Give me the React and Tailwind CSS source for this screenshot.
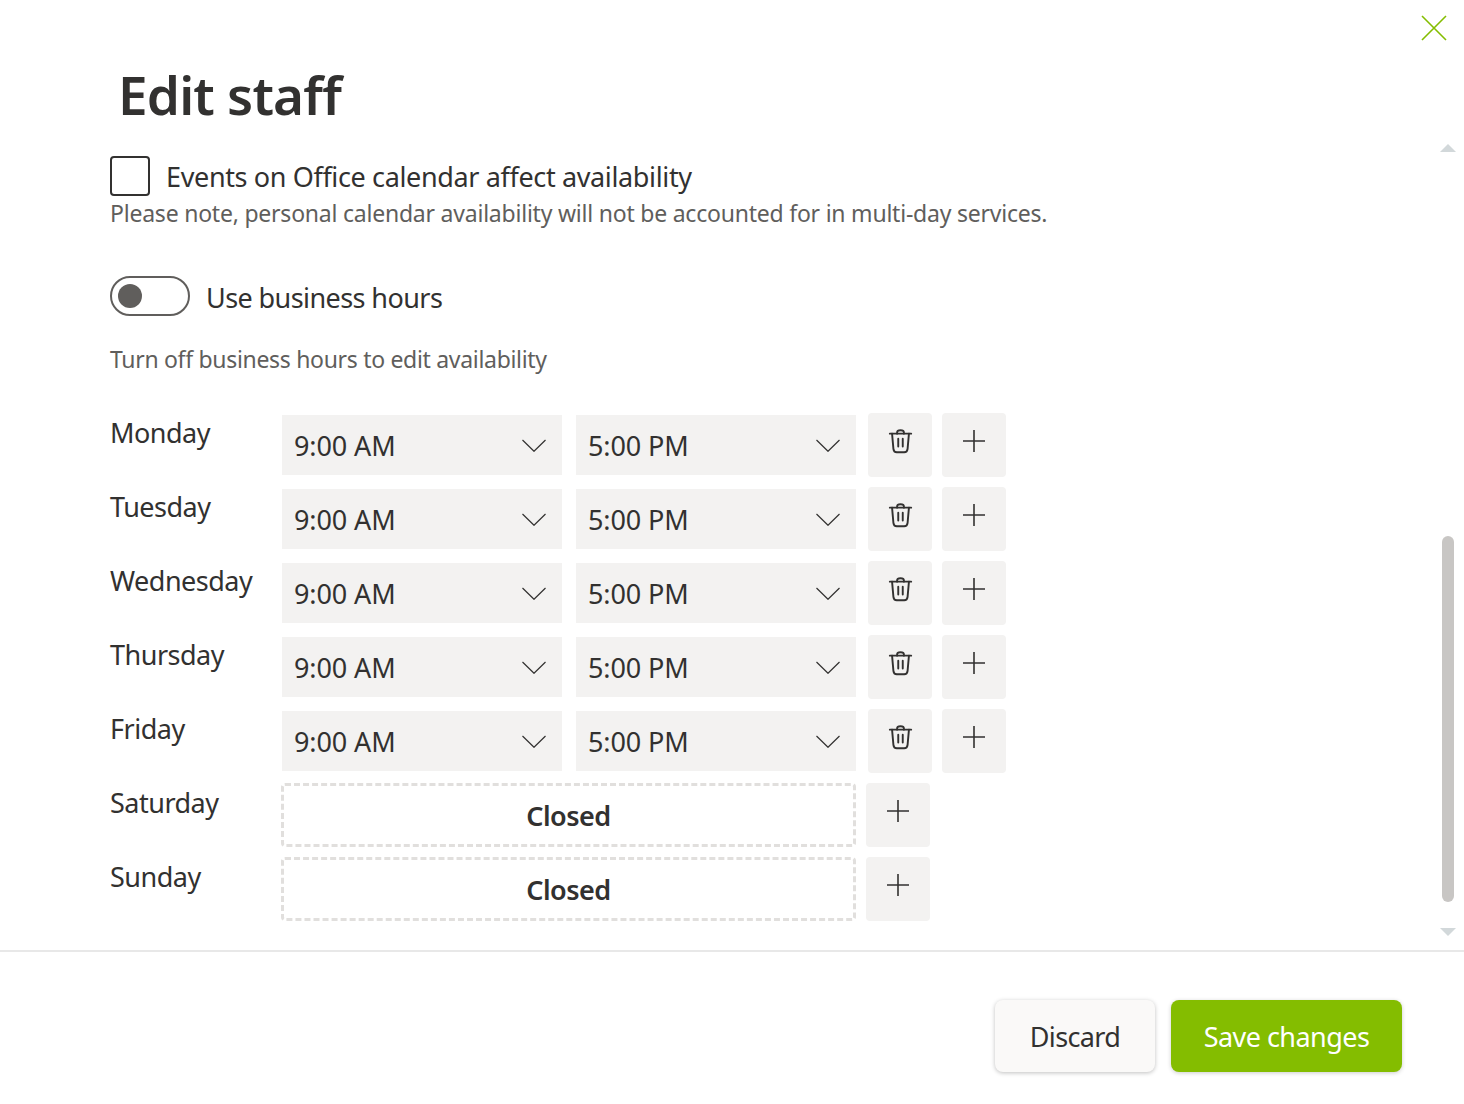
const FONT = "font-['Noto_Sans',sans-serif]";

const openDays = ["Monday", "Tuesday", "Wednesday", "Thursday", "Friday"];
const closedDays = ["Saturday", "Sunday"];

const TrashIcon = () => (
  <svg className="-mt-[2px]" width="27" height="27" viewBox="0 0 24 24" fill="none" stroke="#323130" strokeWidth="1.7" strokeLinecap="round" strokeLinejoin="round">
    <path d="M2.5 5h19" />
    <path d="M9 5V3.8C9 2.8 10 2 12 2s3 .8 3 1.8V5" />
    <path d="M4.5 5l1.2 13.5c.2 2 1.4 3 3 3h6.6c1.6 0 2.8-1 3-3L19.5 5" />
    <path d="M10 9.5v7M14 9.5v7" />
  </svg>
);

const ChevronIcon = () => (
  <svg width="24" height="13" viewBox="0 0 24 13" fill="none" stroke="#323130" strokeWidth="1.2">
    <path d="M.5 1L12 12.3 23.5 1" />
  </svg>
);

const PlusIcon = () => (
  <svg width="22" height="22" viewBox="0 0 22 22" fill="none" stroke="#323130" strokeWidth="1.6">
    <path d="M0 11h22M11 0v22" />
  </svg>
);

const TimeSelect = ({ value }) => (
  <div className="flex h-[60px] w-[280px] items-center justify-between bg-[#f3f2f1] pl-3 pr-4">
    <span className="relative top-px text-[27px] tracking-[-0.1px] text-[#323130]">{value}</span>
    <ChevronIcon />
  </div>
);

const IconButton = ({ children }) => (
  <button className="flex h-16 w-16 items-start justify-center rounded bg-[#f3f2f1] pt-[17px]">
    {children}
  </button>
);

const App = () => {
  return (
    <div className={`${FONT} relative flex h-[1104px] w-[1464px] flex-col overflow-hidden bg-white`}>
      {/* Close */}
      <button className="absolute right-[17px] top-[15px]">
        <svg width="26" height="26" viewBox="0 0 26 26" fill="none" stroke="#84bd00" strokeWidth="1.6">
          <path d="M1 1l24 24M25 1L1 25" />
        </svg>
      </button>

      {/* Header */}
      <div className="h-[156px] shrink-0 pl-[118px] pt-[55px]">
        <h1 className="text-[53px] font-semibold leading-[80px] tracking-[-0.8px] text-[#323130]">Edit staff</h1>
      </div>

      {/* Scroll area */}
      <div className="relative flex-1 pl-[110px]">
        <div className="flex items-center gap-4">
          <div className="h-10 w-10 rounded border-2 border-[#323130]" />
          <span className="relative top-px text-[27px] tracking-[-0.36px] text-[#323130]">
            Events on Office calendar affect availability
          </span>
        </div>
        <p className="-mt-[2px] text-[23px] leading-[36px] tracking-[-0.22px] text-[#605e5c]">
          Please note, personal calendar availability will not be accounted for in multi-day services.
        </p>

        <div className="mt-[45px] flex items-center gap-4">
          <div className="flex h-10 w-20 items-center rounded-full border-2 border-[#605e5c] pl-[6px]">
            <div className="h-6 w-6 rounded-full bg-[#605e5c]" />
          </div>
          <span className="relative top-[2px] text-[27px] tracking-[-0.58px] text-[#323130]">Use business hours</span>
        </div>
        <p className="mt-[25px] text-[23px] leading-[36px] tracking-[-0.31px] text-[#605e5c]">
          Turn off business hours to edit availability
        </p>

        <div className="mt-[36px] flex flex-col gap-[10px]">
          {openDays.map((day) => (
            <div key={day} className="flex h-16">
              <div className="w-[172px] text-[27px] leading-10 tracking-[-0.5px] text-[#323130]">{day}</div>
              <div className="mt-[2px] flex gap-[14px]">
                <TimeSelect value="9:00 AM" />
                <TimeSelect value="5:00 PM" />
              </div>
              <div className="ml-3 flex gap-[10px]">
                <IconButton><TrashIcon /></IconButton>
                <IconButton><PlusIcon /></IconButton>
              </div>
            </div>
          ))}
          {closedDays.map((day) => (
            <div key={day} className="flex h-16">
              <div className="w-[171px] text-[27px] leading-10 tracking-[-0.5px] text-[#323130]">{day}</div>
              <div className="flex h-16 w-[575px] items-center justify-center rounded border-[3px] border-dashed border-[#e1dfdd] text-[27px] font-semibold tracking-[-0.5px] text-[#323130]">
                <span className="relative top-px">Closed</span>
              </div>
              <div className="ml-[10px]">
                <IconButton><PlusIcon /></IconButton>
              </div>
            </div>
          ))}
        </div>

        {/* Scrollbar */}
        <div className="absolute right-[8px] top-[-12px] h-0 w-0 border-x-[8px] border-b-[8px] border-x-transparent border-b-[#d2d8da]" />
        <div className="absolute right-[10px] top-[380px] h-[366px] w-3 rounded-full bg-[#c8c6c4]" />
        <div className="absolute right-[8px] top-[772px] h-0 w-0 border-x-[8px] border-t-[8px] border-x-transparent border-t-[#d2d8da]" />
      </div>

      {/* Footer */}
      <div className="flex h-[154px] shrink-0 justify-end gap-4 border-t-2 border-[#e8e8e8] pr-[62px] pt-[48px]">
        <button className="h-[72px] w-[160px] rounded-lg bg-[#faf9f8] pt-[2px] text-[27px] tracking-[-0.65px] text-[#323130] shadow-[0_1px_4px_rgba(0,0,0,0.25)]">
          Discard
        </button>
        <button className="h-[72px] w-[231px] rounded-lg bg-[#84bd00] pt-[2px] text-[27px] tracking-[-0.55px] text-white shadow-[0_1px_4px_rgba(0,0,0,0.2)]">
          Save changes
        </button>
      </div>
    </div>
  );
};

export default App;
